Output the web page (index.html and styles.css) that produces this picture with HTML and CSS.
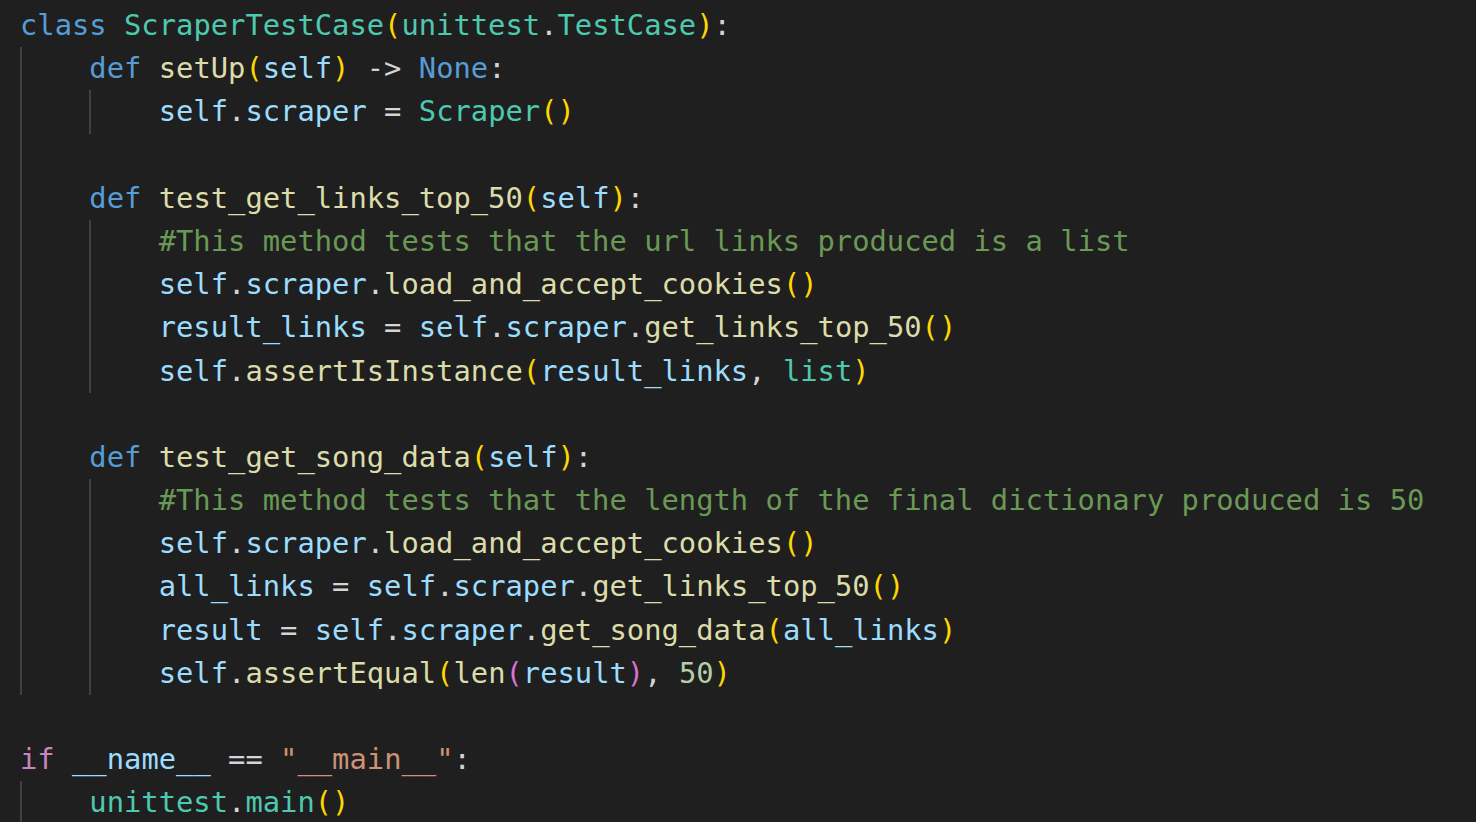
FILE: index.html
```html
<!DOCTYPE html>
<html>
<head>
<meta charset="utf-8">
<link rel="stylesheet" href="styles.css">
</head>
<body>
<div class="editor">
<div class="ln"><span class="k">class</span> <span class="t">ScraperTestCase</span><span class="b1">(</span><span class="t">unittest</span><span class="o">.</span><span class="t">TestCase</span><span class="b1">)</span><span class="o">:</span></div>
<div class="ln"><span class="g"></span><span class="k">def</span> <span class="f">setUp</span><span class="b1">(</span><span class="v">self</span><span class="b1">)</span> <span class="o">-&gt;</span> <span class="k">None</span><span class="o">:</span></div>
<div class="ln"><span class="g"></span><span class="g"></span><span class="v">self</span><span class="o">.</span><span class="v">scraper</span> <span class="o">=</span> <span class="t">Scraper</span><span class="b1">()</span></div>
<div class="ln"><span class="g"></span></div>
<div class="ln"><span class="g"></span><span class="k">def</span> <span class="f">test_get_links_top_50</span><span class="b1">(</span><span class="v">self</span><span class="b1">)</span><span class="o">:</span></div>
<div class="ln"><span class="g"></span><span class="g"></span><span class="c">#This method tests that the url links produced is a list</span></div>
<div class="ln"><span class="g"></span><span class="g"></span><span class="v">self</span><span class="o">.</span><span class="v">scraper</span><span class="o">.</span><span class="f">load_and_accept_cookies</span><span class="b1">()</span></div>
<div class="ln"><span class="g"></span><span class="g"></span><span class="v">result_links</span> <span class="o">=</span> <span class="v">self</span><span class="o">.</span><span class="v">scraper</span><span class="o">.</span><span class="f">get_links_top_50</span><span class="b1">()</span></div>
<div class="ln"><span class="g"></span><span class="g"></span><span class="v">self</span><span class="o">.</span><span class="f">assertIsInstance</span><span class="b1">(</span><span class="v">result_links</span><span class="o">,</span> <span class="t">list</span><span class="b1">)</span></div>
<div class="ln"><span class="g"></span></div>
<div class="ln"><span class="g"></span><span class="k">def</span> <span class="f">test_get_song_data</span><span class="b1">(</span><span class="v">self</span><span class="b1">)</span><span class="o">:</span></div>
<div class="ln"><span class="g"></span><span class="g"></span><span class="c">#This method tests that the length of the final dictionary produced is 50</span></div>
<div class="ln"><span class="g"></span><span class="g"></span><span class="v">self</span><span class="o">.</span><span class="v">scraper</span><span class="o">.</span><span class="f">load_and_accept_cookies</span><span class="b1">()</span></div>
<div class="ln"><span class="g"></span><span class="g"></span><span class="v">all_links</span> <span class="o">=</span> <span class="v">self</span><span class="o">.</span><span class="v">scraper</span><span class="o">.</span><span class="f">get_links_top_50</span><span class="b1">()</span></div>
<div class="ln"><span class="g"></span><span class="g"></span><span class="v">result</span> <span class="o">=</span> <span class="v">self</span><span class="o">.</span><span class="v">scraper</span><span class="o">.</span><span class="f">get_song_data</span><span class="b1">(</span><span class="v">all_links</span><span class="b1">)</span></div>
<div class="ln"><span class="g"></span><span class="g"></span><span class="v">self</span><span class="o">.</span><span class="f">assertEqual</span><span class="b1">(</span><span class="f">len</span><span class="b2">(</span><span class="v">result</span><span class="b2">)</span><span class="o">,</span> <span class="n">50</span><span class="b1">)</span></div>
<div class="ln"></div>
<div class="ln"><span class="kc">if</span> <span class="v">__name__</span> <span class="o">==</span> <span class="s">"__main__"</span><span class="o">:</span></div>
<div class="ln"><span class="g"></span><span class="t">unittest</span><span class="o">.</span><span class="t">main</span><span class="b1">()</span></div>
</div>
</body>
</html>
```

FILE: styles.css
```css
html, body {
  margin: 0;
  padding: 0;
  background: #1f1f1f;
  width: 1476px;
  height: 822px;
  overflow: hidden;
}

.editor {
  padding: 4px 0 0 20px;
  font-family: "DejaVu Sans Mono", "Liberation Mono", monospace;
  font-size: 28.8px;
  line-height: 43.2px;
  color: #d4d4d4;
}

.ln {
  display: block;
  height: 43.2px;
  white-space: pre;
}

.g {
  display: inline-block;
  width: 4ch;
  height: 43.2px;
  vertical-align: top;
  box-sizing: border-box;
  border-left: 2px solid #404040;
}

.k { color: #569cd6; }
.kc { color: #c586c0; }
.t { color: #4ec9b0; }
.f { color: #dcdcaa; }
.v { color: #9cdcfe; }
.o { color: #d4d4d4; }
.c { color: #6a9955; }
.s { color: #ce9178; }
.n { color: #b5cea8; }
.b1 { color: #ffd700; }
.b2 { color: #da70d6; }
```
